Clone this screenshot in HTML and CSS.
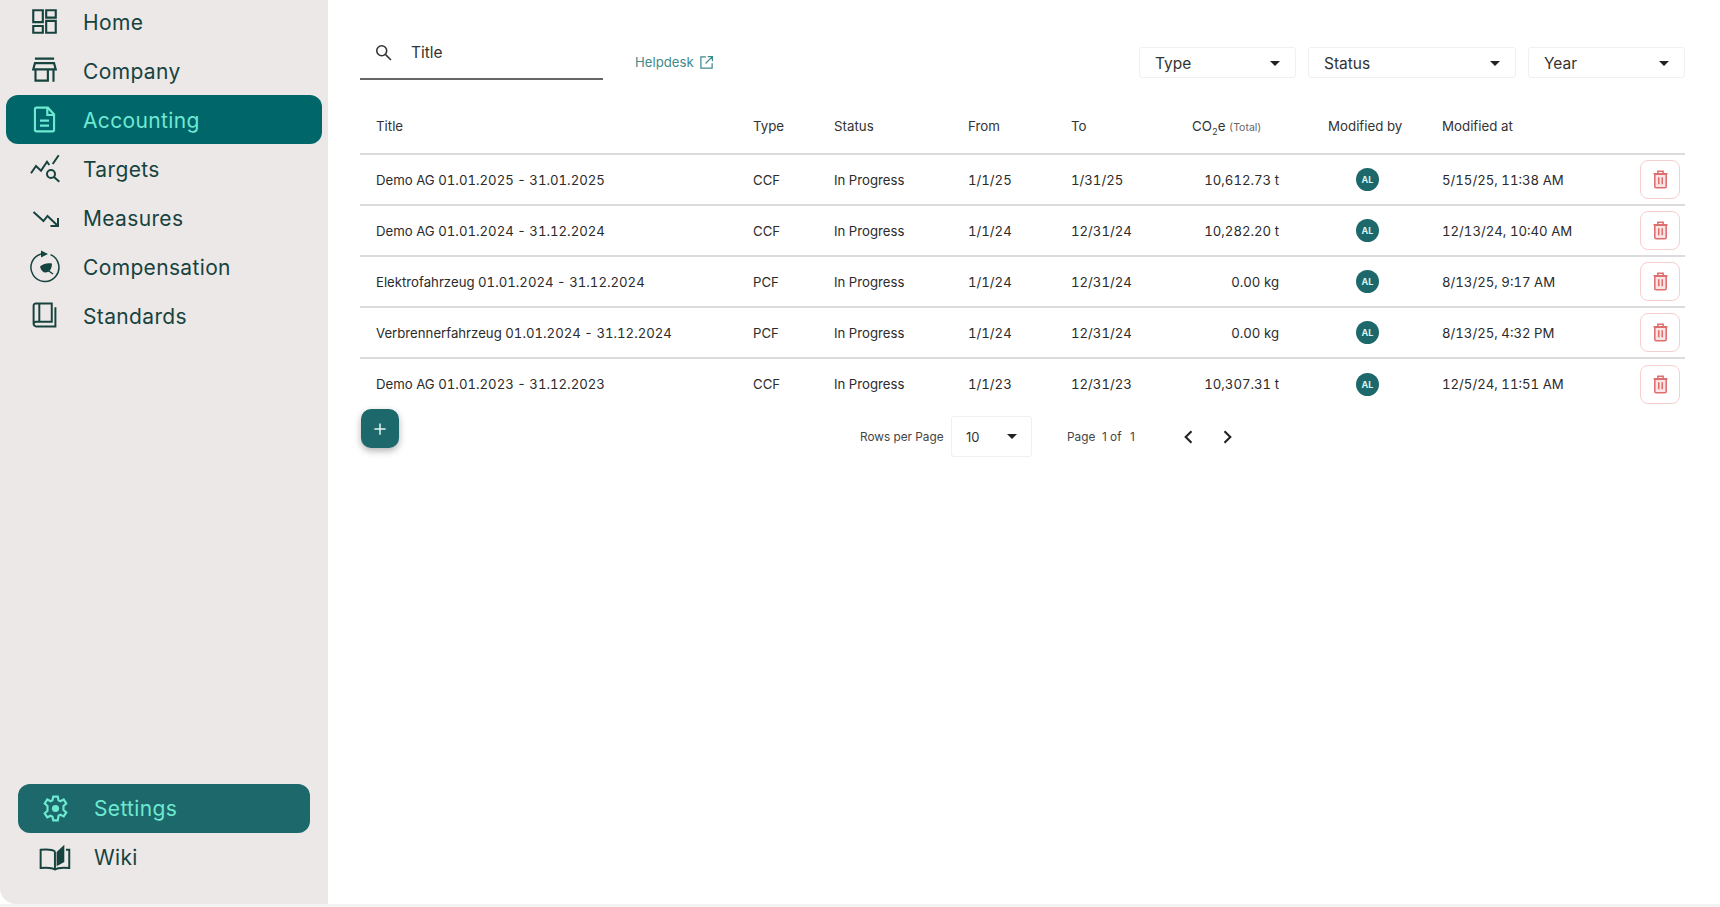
FILE: index.html
```html
<!DOCTYPE html>
<html lang="en">
<head>
  <meta charset="UTF-8" />
  <title>Accounting</title>
  <link rel="stylesheet" href="styles.css">
</head>
<body>
  <div class="app">
    <aside class="sidebar">
      <nav class="nav-main">
        <a class="nav-item">
          <svg class="nav-icon" viewBox="0 0 24 24"><path d="M2 2h8.500v10.500H2zM13.500 2H22v6.500h-8.500zM13.500 11.500H22V22h-8.500zM2 16h8.500v6H2z"/></svg>
          Home
        </a>
        <a class="nav-item">
          <svg class="nav-icon" viewBox="0 0 24 24"><path d="M3.500 1.500h17M3.500 5.500h17L22 11H2zM4 11v11M20 11v11M4 21h11V11"/></svg>
          Company
        </a>
        <a class="nav-item active">
          <svg class="nav-icon" viewBox="0 0 24 24"><path d="M3.500 3a1.500 1.500 0 0 1 1.500-1.500h10L20.500 7.500V21a1.500 1.500 0 0 1-1.500 1.500H5A1.500 1.500 0 0 1 3.500 21zM14.500 2v6h6M8 13h8M8 17.500h8"/></svg>
          Accounting
        </a>
        <a class="nav-item">
          <svg class="nav-icon wide" viewBox="9 4 30 30"><path d="M10 23.300 15 16l5 4.700 6-9 2.300 3.300M31.700 14l6-8.700M33 27l5.300 4.700"/><circle cx="30" cy="24" r="4"/></svg>
          Targets
        </a>
        <a class="nav-item">
          <svg class="nav-icon wide" viewBox="29 202 30 30"><path d="M32.500 211l10 9 4-5L57 225M57 217v8h-7.500"/></svg>
          Measures
        </a>
        <a class="nav-item">
          <svg class="nav-icon comp" viewBox="0 0 34 34"><path class="thin" d="M13 4A14 14 0 1 0 22.500 4.600"/><path class="fill" d="M13 .5l7 3.500-7 3.500z"/><path class="fill" d="M12 16.500c4-3.500 8-3.500 12-3 0 5-2.500 9-6.500 9-2.500 0-4.500-2-5.500-6z"/><path class="thin" d="M18 19l7 5"/></svg>
          Compensation
        </a>
        <a class="nav-item">
          <svg class="nav-icon" viewBox="0 0 24 26"><path d="M1.500 21V3.500a2 2 0 0 1 2-2H19v17.500H3.500a2.500 2.500 0 0 0-2 2 2.500 2.500 0 0 0 2.500 2.500h18.500V5M7 1.500v17"/></svg>
          Standards
        </a>
      </nav>
      <nav class="nav-bottom">
        <a class="nav-item active soft">
          <svg class="nav-icon" viewBox="0 0 24 24"><path d="M10 1.500h4l.7 3.200 1.700.8 2.900-1.500 2.300 3.600-2.500 2.100v3.600l2.500 2.200-2.300 3.500-2.900-1.400-1.700.9L14 22.500h-4l-.7-3.200-1.700-.9-2.900 1.400-2.300-3.500 2.500-2.200V9.700L2.400 7.600l2.300-3.600 2.900 1.500 1.700-.8z"/><circle class="fill" cx="12" cy="12" r="3.200"/></svg>
          Settings
        </a>
        <a class="nav-item">
          <svg class="nav-icon book" viewBox="0 0 30 24"><path d="M14.500 6.500C12 4.500 7 4.500 1.500 5v16.500c5.500-.5 10.500-.5 13 1.500 2.500-2 7.500-2 13-1.500V5h-3M14.500 6.500V23"/><path class="fill" d="M16 7l7-6.500V16l-7 4z"/></svg>
          Wiki
        </a>
      </nav>
    </aside>

    <main class="content">
      <div class="toolbar">
        <div class="search">
          <svg class="search-icon" viewBox="0 0 24 24"><circle cx="9.500" cy="9.500" r="7"/><path d="m15 15 7.500 7.500"/></svg>
          <span>Title</span>
        </div>
        <a class="helpdesk">
          Helpdesk
          <svg viewBox="0 0 24 24"><path d="M11 3H3v18h18v-8M14 2.500h7.500V10M21 3 10.500 13.500"/></svg>
        </a>
        <div class="filters">
          <div class="select type">Type<i class="caret"></i></div>
          <div class="select status">Status<i class="caret"></i></div>
          <div class="select year">Year<i class="caret"></i></div>
        </div>
      </div>

      <table class="list">
        <colgroup>
          <col class="c-title"><col class="c-type"><col class="c-status"><col class="c-from"><col class="c-to"><col class="c-co2"><col class="c-by"><col class="c-at"><col>
        </colgroup>
        <thead>
          <tr>
            <th>Title</th><th>Type</th><th>Status</th><th>From</th><th>To</th>
            <th>CO<sub>2</sub>e <small>(Total)</small></th><th>Modified by</th><th>Modified at</th><th></th>
          </tr>
        </thead>
        <tbody id="rows"></tbody>
      </table>

      <div class="table-footer">
        <button class="add">
          <svg viewBox="0 0 24 24"><path d="M12 4.500v15M4.500 12h15"/></svg>
        </button>
        <div class="pager">
          <span class="rows-label">Rows per Page</span>
          <div class="select rows">10<i class="caret"></i></div>
          <span class="page-label">Page</span>
          <span class="page-num">1 of</span>
          <span class="page-total">1</span>
          <svg class="arrow first" viewBox="0 0 24 24"><path d="M15 5l-7 7 7 7"/></svg>
          <svg class="arrow" viewBox="0 0 24 24"><path d="M9 5l7 7-7 7"/></svg>
        </div>
      </div>
    </main>
  </div>

  <script>
    const items = [
      ['Demo AG 01.01.2025 - 31.01.2025', 'CCF', '1/1/25', '1/31/25', '10,612.73 t', '5/15/25, 11:38 AM'],
      ['Demo AG 01.01.2024 - 31.12.2024', 'CCF', '1/1/24', '12/31/24', '10,282.20 t', '12/13/24, 10:40 AM'],
      ['Elektrofahrzeug 01.01.2024 - 31.12.2024', 'PCF', '1/1/24', '12/31/24', '0.00 kg', '8/13/25, 9:17 AM'],
      ['Verbrennerfahrzeug 01.01.2024 - 31.12.2024', 'PCF', '1/1/24', '12/31/24', '0.00 kg', '8/13/25, 4:32 PM'],
      ['Demo AG 01.01.2023 - 31.12.2023', 'CCF', '1/1/23', '12/31/23', '10,307.31 t', '12/5/24, 11:51 AM']
    ];
    const trash = '<svg viewBox="0 0 24 24"><path class="body" d="M5.500 6v14a1.500 1.500 0 0 0 1.500 1.500h10a1.500 1.500 0 0 0 1.500-1.500V6z"/><path d="M4 5.500h16M9 5V2.500h6V5M10 9.500v8M14 9.500v8"/></svg>';
    document.getElementById('rows').innerHTML = items.map(r => `
      <tr>
        <td>${r[0]}</td><td>${r[1]}</td><td>In Progress</td><td>${r[2]}</td><td>${r[3]}</td>
        <td class="num">${r[4]}</td>
        <td><span class="avatar">AL</span></td>
        <td>${r[5]}</td>
        <td class="actions"><button class="delete">${trash}</button></td>
      </tr>`).join('');
  </script>
</body>
</html>
```

FILE: styles.css
```css
* {
  box-sizing: border-box;
}

body {
  margin: 0;
  background: #f3f3f3;
  font-family: Inter, "Noto Sans", Arial, sans-serif;
  color: #2b2b2b;
  overflow: hidden;
}

.app {
  display: flex;
  height: 904px;
  background: #fff;
  overflow: hidden;
}

/* Sidebar */
.sidebar {
  width: 328px;
  flex-shrink: 0;
  background: #ece8e7;
  border-bottom-left-radius: 16px;
  display: flex;
  flex-direction: column;
  justify-content: space-between;
}

.nav-main {
  margin-top: -3px;
  padding: 0 6px;
}

.nav-bottom {
  padding: 0 18px 22px;
}

.nav-item {
  height: 49px;
  display: flex;
  align-items: center;
  gap: 25px;
  padding-left: 25px;
  border-radius: 12px;
  font-size: 21px;
  letter-spacing: 0.35px;
  color: #17433f;
}

.nav-main .nav-item {
  padding-top: 1px;
}

.nav-main .nav-icon {
  margin-top: -1px;
}

.nav-item.active {
  background: #00666a;
  color: #6ee9d2;
}

.nav-item.soft {
  background: #1d686a;
}

.nav-bottom .nav-item {
  padding-left: 24px;
}

.nav-icon {
  width: 27px;
  height: 27px;
  flex-shrink: 0;
  fill: none;
  stroke: currentColor;
  stroke-width: 1.900;
}

.nav-icon.wide {
  width: 30px;
  height: 30px;
  margin-left: -1.500px;
  margin-right: -1.500px;
  stroke-width: 2;
}

.nav-icon.comp {
  width: 34px;
  height: 34px;
  margin-left: -3.500px;
  margin-right: -3.500px;
}

.nav-icon.book {
  width: 33px;
  margin: 0 -3px;
  stroke-width: 1.800;
}

.nav-icon .fill {
  fill: currentColor;
  stroke: none;
}

.nav-icon .thin {
  stroke-width: 1.500;
}

/* Main */
.content {
  flex: 1;
  padding: 0 35px 0 32px;
}

.toolbar {
  height: 98px;
  display: flex;
  align-items: flex-start;
}

.search {
  width: 243px;
  height: 51px;
  margin-top: 29px;
  border-bottom: 2px solid #666;
  padding: 15px 0 0 15px;
  display: flex;
  align-items: flex-start;
  gap: 19px;
  font-size: 15.500px;
  line-height: 17px;
  color: #333;
}

.search-icon {
  width: 17px;
  height: 17px;
  fill: none;
  stroke: #333;
  stroke-width: 2.200;
}

.helpdesk {
  margin: 52px 0 0 32px;
  display: flex;
  align-items: center;
  gap: 5px;
  font-size: 13.200px;
  line-height: 20px;
  color: #3f8a8a;
}

.helpdesk svg {
  width: 15px;
  height: 15px;
  fill: none;
  stroke: currentColor;
  stroke-width: 2;
}

.filters {
  margin: 47px 0 0 auto;
  display: flex;
  gap: 12px;
}

.select {
  height: 31px;
  display: flex;
  align-items: center;
  justify-content: space-between;
  padding: 1px 15px 0;
  border: 1px solid #f0f0f0;
  border-radius: 3px;
  font-size: 15.500px;
  color: #333;
}

.select.type {
  width: 157px;
}

.select.status {
  width: 208px;
}

.select.year {
  width: 157px;
}

.caret {
  width: 0;
  height: 0;
  border-left: 5.500px solid transparent;
  border-right: 5.500px solid transparent;
  border-top: 5.500px solid #222;
}

/* Table */
.list {
  width: 100%;
  table-layout: fixed;
  border-collapse: collapse;
  font-size: 13.200px;
  font-variant-numeric: tabular-nums;
}

.c-title { width: 377px; }
.c-type { width: 81px; }
.c-status { width: 134px; }
.c-from { width: 103px; }
.c-to { width: 121px; }
.c-co2 { width: 136px; }
.c-by { width: 114px; }
.c-at { width: 204px; }

.list th {
  height: 56px;
  padding: 1px 0 0 16px;
  text-align: left;
  font-size: 13.300px;
  font-weight: 400;
  color: #333;
  border-bottom: 2px solid #dcdcdc;
}

.list th sub {
  font-size: 9px;
  line-height: 0;
}

.list th small {
  font-size: 10.500px;
  color: #666;
}

.list td {
  height: 51px;
  padding: 0 0 0 16px;
  white-space: nowrap;
  border-bottom: 2px solid #dcdcdc;
}

.list tr:last-child td {
  border-bottom: none;
}

.list td.num {
  text-align: right;
  padding-right: 33px;
}

.avatar {
  width: 23px;
  height: 23px;
  margin-left: 28px;
  display: flex;
  align-items: center;
  justify-content: center;
  border-radius: 50%;
  background: #1d686a;
  color: #d9f2ee;
  font-size: 9px;
  font-weight: 700;
}

.list td.actions {
  padding: 0 5px 0 0;
  text-align: right;
}

.delete {
  width: 40px;
  height: 39px;
  padding: 0;
  display: inline-flex;
  align-items: center;
  justify-content: center;
  vertical-align: middle;
  background: #fff;
  border: 1px solid #f6cfcf;
  border-radius: 8px;
}

.delete svg {
  width: 21px;
  height: 21px;
  fill: none;
  stroke: #de6f6f;
  stroke-width: 1.800;
}

.delete .body {
  fill: rgba(222, 111, 111, 0.18);
}

/* Footer under the table */
.table-footer {
  display: flex;
  align-items: flex-start;
}

.add {
  width: 38px;
  height: 39px;
  margin-left: 1px;
  padding: 0;
  border: none;
  border-radius: 10px;
  background: #1d686a;
  box-shadow: 0 3px 7px rgba(0, 0, 0, 0.3);
  display: flex;
  align-items: center;
  justify-content: center;
}

.add svg {
  width: 18px;
  height: 18px;
  fill: none;
  stroke: #e4f5f1;
  stroke-width: 2;
}

.pager {
  margin: 7px 0 0 461px;
  display: flex;
  align-items: center;
  font-size: 11.800px;
  color: #444;
}

.rows-label {
  width: 91px;
  white-space: nowrap;
}

.select.rows {
  width: 81px;
  height: 41px;
  font-size: 13px;
  padding: 0 14px;
}

.page-label {
  margin-left: 35px;
  width: 35px;
}

.page-num {
  width: 28px;
}

.page-total {
  width: 34px;
}

.arrow {
  width: 20px;
  height: 20px;
  margin-left: 18px;
  fill: none;
  stroke: #222;
  stroke-width: 2.500;
}

.arrow.first {
  margin-left: 15px;
}
```
